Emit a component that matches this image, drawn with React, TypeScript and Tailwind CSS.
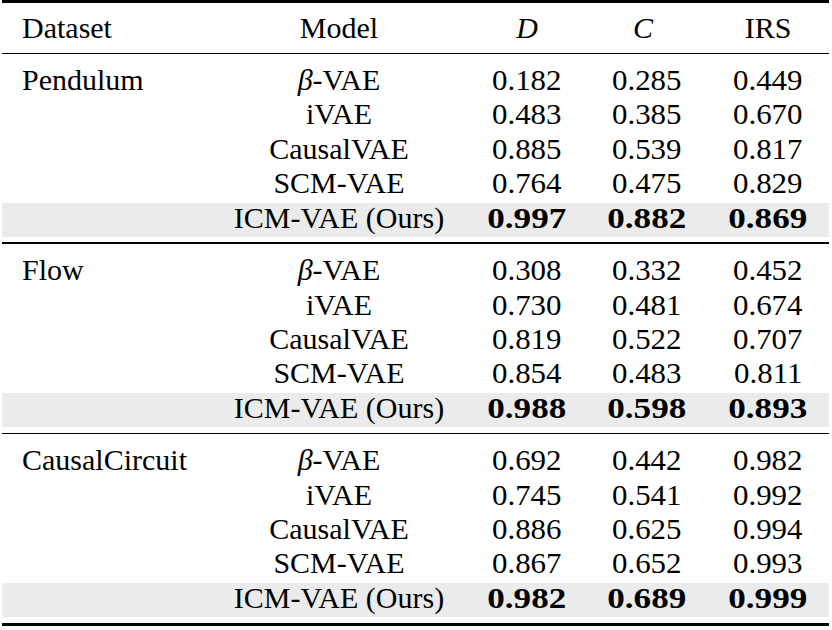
import React from "react";

type RowData = { ds?: string; model: React.ReactNode; d: string; c: string; irs: string; best?: boolean };

const serif = { fontFamily: '"Liberation Serif", "Times New Roman", serif' };

const Beta = () => <span className="italic">β</span>;

const sections: RowData[][] = [
  [
    { ds: "Pendulum", model: <><Beta />-VAE</>, d: "0.182", c: "0.285", irs: "0.449" },
    { model: "iVAE", d: "0.483", c: "0.385", irs: "0.670" },
    { model: "CausalVAE", d: "0.885", c: "0.539", irs: "0.817" },
    { model: "SCM-VAE", d: "0.764", c: "0.475", irs: "0.829" },
    { model: "ICM-VAE (Ours)", d: "0.997", c: "0.882", irs: "0.869", best: true },
  ],
  [
    { ds: "Flow", model: <><Beta />-VAE</>, d: "0.308", c: "0.332", irs: "0.452" },
    { model: "iVAE", d: "0.730", c: "0.481", irs: "0.674" },
    { model: "CausalVAE", d: "0.819", c: "0.522", irs: "0.707" },
    { model: "SCM-VAE", d: "0.854", c: "0.483", irs: "0.811" },
    { model: "ICM-VAE (Ours)", d: "0.988", c: "0.598", irs: "0.893", best: true },
  ],
  [
    { ds: "CausalCircuit", model: <><Beta />-VAE</>, d: "0.692", c: "0.442", irs: "0.982" },
    { model: "iVAE", d: "0.745", c: "0.541", irs: "0.992" },
    { model: "CausalVAE", d: "0.886", c: "0.625", irs: "0.994" },
    { model: "SCM-VAE", d: "0.867", c: "0.652", irs: "0.993" },
    { model: "ICM-VAE (Ours)", d: "0.982", c: "0.689", irs: "0.999", best: true },
  ],
];

const Num = ({ v, best }: { v: string; best?: boolean }) =>
  best ? (
    <span className="inline-block font-bold scale-x-[1.17] origin-center">{v}</span>
  ) : (
    <span className="inline-block scale-x-[1.03] origin-center">{v}</span>
  );

const Row = ({ r }: { r: RowData }) => (
  <div
    className={`grid grid-cols-[228px_218px_158px_82px_141px] h-[34.4px] items-center pb-[9px] ${
      r.best ? "bg-[#ebebeb]" : ""
    }`}
  >
    <div className="pl-[20px] text-left whitespace-nowrap">{r.ds ?? null}</div>
    <div className="text-center whitespace-nowrap">{r.model}</div>
    <div className="text-center whitespace-nowrap">
      <Num v={r.d} best={r.best} />
    </div>
    <div className="text-center whitespace-nowrap">
      <Num v={r.c} best={r.best} />
    </div>
    <div className="pl-[19px] text-center whitespace-nowrap">
      <Num v={r.irs} best={r.best} />
    </div>
  </div>
);

export default function App() {
  return (
    <div className="w-[832px] h-[630px] bg-white overflow-hidden text-black text-[30px] leading-none" style={serif}>
      <div className="ml-[2px] w-[827px] flex flex-col">
        <div className="h-[3px] bg-black" />
        <div className="grid grid-cols-[228px_218px_158px_82px_141px] h-[49.5px] items-center">
          <div className="pl-[20px] whitespace-nowrap">Dataset</div>
          <div className="text-center">Model</div>
          <div className="text-center">
            <span className="italic">D</span>
          </div>
          <div className="pr-[8px] text-center">
            <span className="italic">C</span>
          </div>
          <div className="pl-[19px] text-center">IRS</div>
        </div>
        <div className="h-[1.5px] bg-black" />
        {sections.map((s, i) => (
          <div key={i} className="flex flex-col">
            <div className="h-[11px]" />
            {s.map((r, j) => (
              <Row key={j} r={r} />
            ))}
            <div className="h-[5.5px]" />
            {i < sections.length - 1 ? (
              <div className="h-[1.7px] bg-black" />
            ) : (
              <div className="h-[3.4px] bg-black" />
            )}
          </div>
        ))}
      </div>
    </div>
  );
}
